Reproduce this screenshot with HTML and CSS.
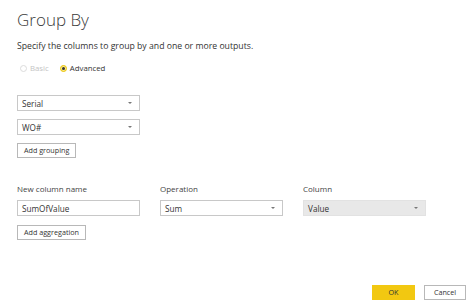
FILE: index.html
```html
<!DOCTYPE html>
<html>
<head>
<meta charset="utf-8">
<link rel="stylesheet" href="styles.css">
</head>
<body>
<div class="dialog">
  <h1 class="title">Group By</h1>
  <p class="subtitle">Specify the columns to group by and one or more outputs.</p>
  <div class="radios">
    <label class="radio disabled"><span class="circle"></span>Basic</label>
    <label class="radio checked"><span class="circle"><span class="dot"></span></span>Advanced</label>
  </div>
  <div class="groupings">
    <div class="select"><span>Serial</span><span class="arrow"></span></div>
    <div class="select"><span>WO#</span><span class="arrow"></span></div>
    <div class="btn-row"><button class="btn">Add grouping</button></div>
  </div>
  <div class="aggs">
    <div class="agg-row">
      <div class="field">
        <div class="label">New column name</div>
        <div class="input">SumOfValue</div>
      </div>
      <div class="field">
        <div class="label">Operation</div>
        <div class="select"><span>Sum</span><span class="arrow"></span></div>
      </div>
      <div class="field">
        <div class="label">Column</div>
        <div class="select gray"><span>Value</span><span class="arrow"></span></div>
      </div>
    </div>
    <div class="btn-row"><button class="btn">Add aggregation</button></div>
  </div>
  <div class="footer">
    <button class="btn ok">OK</button>
    <button class="btn cancel">Cancel</button>
  </div>
</div>
</body>
</html>
```
FILE: styles.css
```css
html, body {
  margin: 0;
  padding: 0;
  background: #fff;
}
body {
  font-family: "Open Sans", "Noto Sans", sans-serif;
  color: #333;
  width: 474px;
  height: 308px;
  overflow: hidden;
}
.dialog {
  padding: 9px 8px 8px 17px;
  display: flex;
  flex-direction: column;
  height: 308px;
  box-sizing: border-box;
}
.title {
  margin: 0;
  font-weight: 300;
  font-size: 17px;
  line-height: 22px;
  color: #3a3a3a;
}
.subtitle {
  margin: 9px 0 0;
  font-size: 8.7px;
  line-height: 12px;
  color: #333;
}
.radios {
  display: flex;
  gap: 8px;
  margin-top: 10px;
  height: 12px;
  align-items: center;
  font-size: 7.8px;
}
.radio {
  display: flex;
  align-items: center;
  gap: 3px;
  color: #333;
}
.radio.disabled {
  color: #c4c4c4;
}
.circle {
  width: 5px;
  height: 5px;
  border: 1px solid #dcdcdc;
  border-radius: 50%;
  display: flex;
  align-items: center;
  justify-content: center;
  margin-left: 3px;
}
.radio.checked .circle {
  border-color: #e9c200;
  background: #fbe98a;
}
.dot {
  width: 3px;
  height: 3px;
  background: #333;
  border-radius: 50%;
}
.groupings {
  margin-top: 21px;
  display: flex;
  flex-direction: column;
  gap: 8px;
}
.btn-row {
  display: flex;
}
.select, .input {
  width: 123px;
  height: 16px;
  box-sizing: border-box;
  border: 1px solid #c8c8c8;
  display: flex;
  align-items: center;
  justify-content: space-between;
  padding: 0 7px 0 4px;
  font-size: 8.2px;
  color: #333;
  background: #fff;
}
.select.gray {
  background: #e8e8e8;
  border-color: #e2e2e2;
}
.arrow {
  width: 0;
  height: 0;
  border-left: 2px solid transparent;
  border-right: 2px solid transparent;
  border-top: 2px solid #777;
}
.btn {
  font-family: inherit;
  font-size: 7.2px;
  color: #333;
  background: #fff;
  border: 1px solid #b8b8b8;
  height: 15px;
  padding: 0 6px;
  line-height: 13px;
  margin: 0;
}
.aggs {
  margin-top: 25px;
  display: flex;
  flex-direction: column;
  gap: 9px;
}
.agg-row {
  display: flex;
  gap: 20px;
}
.field {
  display: flex;
  flex-direction: column;
  gap: 5px;
}
.label {
  font-size: 8px;
  line-height: 12px;
  color: #444;
}
.footer {
  margin-top: auto;
  display: flex;
  justify-content: flex-end;
  gap: 9px;
}
.btn.ok {
  width: 43px;
  height: 15px;
  background: #f2c811;
  border-color: #f2c811;
}
.btn.cancel {
  width: 42px;
  height: 15px;
}
```
